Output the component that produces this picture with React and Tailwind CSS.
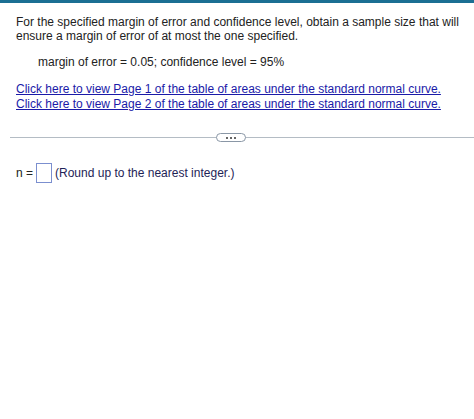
export default function App() {
  return (
    <div className="w-[474px] h-[419px] bg-white text-[#222] font-['Liberation_Sans',Arial,sans-serif] text-[12px]">
      <div className="h-[3px] bg-[#1b6f93]" />
      <div className="pl-[16px] pr-2 pt-[12px]">
        <p className="leading-[14px]">
          For the specified margin of error and confidence level, obtain a sample size that will ensure a margin of error of at most the one specified.
        </p>
        <p className="mt-[12px] pl-[22px] leading-[14px]">margin of error = 0.05; confidence level = 95%</p>
        <div className="mt-[13px] leading-[15px] text-[#1a1aa8]">
          <a href="#" className="underline block">Click here to view Page 1 of the table of areas under the standard normal curve.</a>
          <a href="#" className="underline block">Click here to view Page 2 of the table of areas under the standard normal curve.</a>
        </div>
      </div>
      <div className="mt-[21px] ml-[10px] relative h-[9px] flex items-center">
        <div className="h-px w-full bg-[#b4bcc4]" />
        <div className="absolute left-[206px] top-0 w-[30px] h-[9px] rounded-full border border-[#8a97a6] bg-white flex items-center justify-center gap-[2px]">
          <span className="w-[2px] h-[2px] bg-[#333] rounded-full" />
          <span className="w-[2px] h-[2px] bg-[#333] rounded-full" />
          <span className="w-[2px] h-[2px] bg-[#333] rounded-full" />
        </div>
      </div>
      <div className="mt-[21px] pl-[16px] flex items-center gap-[3px]">
        <span>n =</span>
        <span className="w-[16px] h-[20px] border border-[#7b8fcf] inline-block" />
        <span className="text-[#1e2356]">(Round up to the nearest integer.)</span>
      </div>
    </div>
  )
}
